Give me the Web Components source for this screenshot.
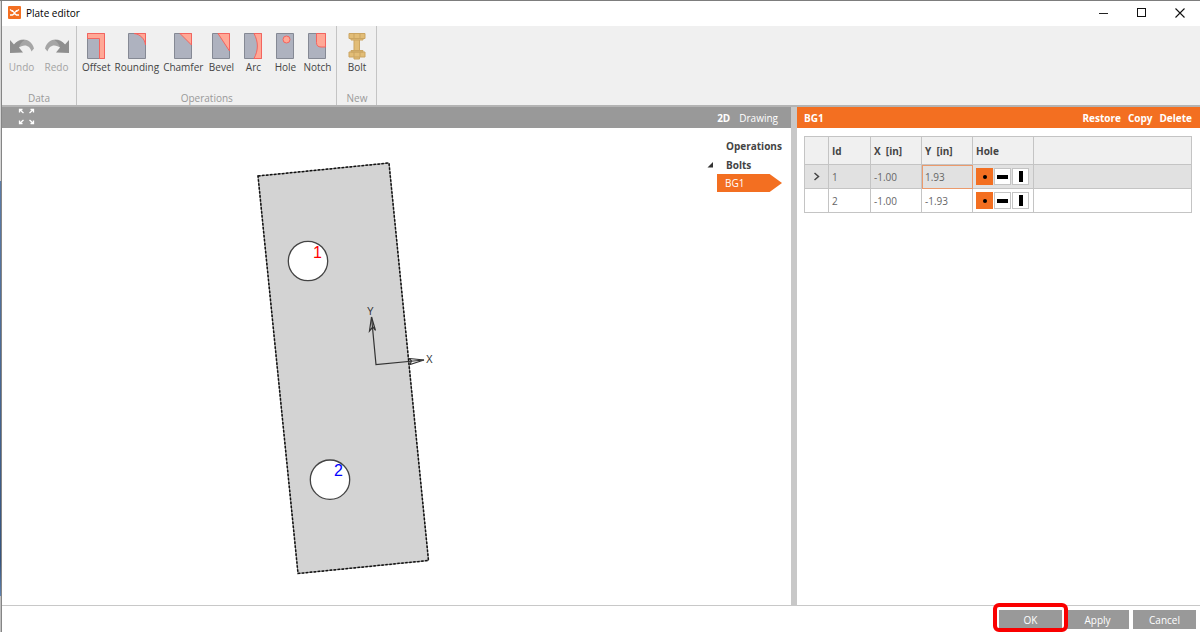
<!DOCTYPE html>
<html lang="en">
<head>
<meta charset="utf-8">
<title>Plate editor</title>
<style>
  html, body { margin: 0; height: 100%; }
  body { font: 10px/14px "Open Sans", "Noto Sans", sans-serif; color: #444; background: #fff; }
</style>
</head>
<body>
<plate-editor></plate-editor>

<template id="plate-editor">
  <style>
    :host { display: flex; flex-direction: column; height: 100vh; box-sizing: border-box;
      border-top: 1px solid #7d7d7d; position: relative; padding-left: 2px; --accent: #f36f21; --bar: #999; }
    .edge { position: absolute; left: 0; top: 0; bottom: 0; width: 2px;
      background: linear-gradient(90deg, transparent 50%, #858585 50%), linear-gradient(#d5d5d5 180px, #5c7ca8 180px, #35547f 560px, #6083b0 595px, #c0c0c0 595px); }
    main { flex: 1; min-height: 0; display: grid; grid-template-columns: minmax(0, 789fr) 6px minmax(0, 403fr); }
    .split { background: #c8c8c8; }
    section { display: flex; flex-direction: column; min-width: 0; min-height: 0; }
    .work { flex: 1; min-height: 0; display: flex; }
    plate-canvas { flex: 1; min-width: 0; }
    .table { padding: 8px 8px 0 7px; }
    button { font: inherit; color: inherit; background: none; border: 0; padding: 0; }
    .quiet { font-weight: 400; }
    svg { display: block; }
  </style>
  <div class="edge"></div>
  <title-bar>Plate editor</title-bar>
  <plate-ribbon></plate-ribbon>
  <main>
    <section>
      <panel-bar>
        <button slot="lead" aria-label="Zoom to fit"><svg width="18" height="18" viewBox="0 0 18 18" fill="none" stroke="#fff" stroke-width="1.3"><path d="M1.500 5.500V2.500H4.500M1.500 2.500L5.500 6M12.500 2.500H15.500V5.500M15.500 2.500L11.500 6M1.500 13.500V16.500H4.500M1.500 16.500L5.500 13M12.500 16.500H15.500V13.500M15.500 16.500L11.500 13"/></svg></button>
        <button>2D</button><button class="quiet">Drawing</button>
      </panel-bar>
      <div class="work"><plate-canvas></plate-canvas><operation-tree></operation-tree></div>
    </section>
    <div class="split"></div>
    <section>
      <panel-bar accent><span slot="lead">BG1</span><button>Restore</button><button>Copy</button><button>Delete</button></panel-bar>
      <div class="table"><bolt-table></bolt-table></div>
    </section>
  </main>
  <dialog-actions></dialog-actions>
</template>

<template id="title-bar">
  <style>
    :host { display: flex; align-items: center; height: 23px; flex: none; color: #000; padding: 0 11px 2px 6px; gap: 5px; }
    .name { flex: 1; }
    .controls { display: flex; gap: 20px; }
    button { border: 0; background: none; padding: 0; width: 18px; height: 18px; }
    svg { display: block; }
  </style>
  <svg width="13" height="13" viewBox="0 0 13 13"><rect width="13" height="13" rx="1" fill="#f36f21"/><path d="M2 3.500L4.500 5.500M11 3.500L8.500 5.500M4.300 4.500L6.500 6.800L8.700 4.500" fill="none" stroke="#fff" stroke-width="1.200"/><path d="M2 9H4.500L6.500 7.500L8.500 9H11" fill="none" stroke="#fff" stroke-width="1.500"/></svg>
  <span class="name"><slot></slot></span>
  <div class="controls">
    <button aria-label="Minimize"><svg width="18" height="18"><path d="M4 9.500H13" stroke="#222"/></svg></button>
    <button aria-label="Maximize"><svg width="18" height="18"><rect x="4.500" y="4.500" width="8" height="8" fill="none" stroke="#111"/></svg></button>
    <button aria-label="Close"><svg width="18" height="18"><path d="M4.500 4.500L13.500 13.500M13.500 4.500L4.500 13.500" stroke="#111" stroke-width="1.100"/></svg></button>
  </div>
</template>

<template id="plate-ribbon">
  <style>
    :host { display: flex; flex: none; height: 79px; background: #f0f0f0; border-bottom: 2px solid #b4b4b4; }
    svg { display: block; overflow: visible; }
    .g { fill: #aeb2bf; stroke: #858994; }
    .r { fill: #ffa896; stroke: #f4645f; }
    .b { fill: #e2bd77; stroke: #cba562; }
  </style>
  <ribbon-group label="Data" style="--item: 35px; --pad: 2px">
    <ribbon-button label="Undo" disabled><svg width="24" height="26" viewBox="0 0 24 26"><path d="M4 11.500C9 4.500 21 4 24 15.500L21.500 18.500C20 12 14 10.500 8 15Z" fill="#a5a5a5"/><path d="M0 7L4 11.500C7 8 11 6.500 14.500 7C11.500 9 10 11 9 14.500L13 19.500L0 20Z" fill="#8f8f8f"/></svg></ribbon-button>
    <ribbon-button label="Redo" disabled><svg width="24" height="26" viewBox="0 0 24 26"><g transform="matrix(-1 0 0 1 24 0)"><path d="M4 11.500C9 4.500 21 4 24 15.500L21.500 18.500C20 12 14 10.500 8 15Z" fill="#a5a5a5"/><path d="M0 7L4 11.500C7 8 11 6.500 14.500 7C11.500 9 10 11 9 14.500L13 19.500L0 20Z" fill="#8f8f8f"/></g></svg></ribbon-button>
  </ribbon-group>
  <ribbon-group label="Operations">
    <ribbon-button label="Offset"><svg width="18" height="26"><path class="g" d="M.5 .5H17.500V25.500H.5Z"/><path class="r" d="M.5 .5H17.500V25.500H12.500V5.500H.5Z"/></svg></ribbon-button>
    <ribbon-button label="Rounding"><svg width="18" height="26"><path class="g" d="M.5 .5H17.500V25.500H.5Z"/><path class="r" d="M6 .5H17.500V12C17 6 12 1 6 .5Z"/></svg></ribbon-button>
    <ribbon-button label="Chamfer"><svg width="18" height="26"><path class="g" d="M.5 .5H17.500V25.500H.5Z"/><path class="r" d="M6 .5H17.500V12Z"/></svg></ribbon-button>
    <ribbon-button label="Bevel"><svg width="18" height="26"><path class="g" d="M.5 .5H17.500V25.500H.5Z"/><path class="r" d="M6 .5H17.500V18Z"/></svg></ribbon-button>
    <ribbon-button label="Arc"><svg width="18" height="26"><path class="g" d="M.5 .5H17.500V25.500H.5Z"/><path class="r" d="M10 .5H17.500V25.500H10C14.500 17 14.500 9 10 .5Z"/></svg></ribbon-button>
    <ribbon-button label="Hole"><svg width="18" height="26"><path class="g" d="M.5 .5H17.500V25.500H.5Z"/><circle class="r" cx="10.500" cy="6.500" r="3.500"/></svg></ribbon-button>
    <ribbon-button label="Notch"><svg width="18" height="26"><path class="g" d="M.5 .5H17.500V25.500H.5Z"/><path class="r" d="M8.500 .5H17.500V14H13Q8.500 14 8.500 9.500Z"/></svg></ribbon-button>
  </ribbon-group>
  <ribbon-group label="New" style="--item: 31px; --pad: 4px">
    <ribbon-button label="Bolt"><svg width="18" height="26"><path class="b" d="M6 .5V26H11.500V.5Z"/><path class="b" d="M1 .5H17V5.500H1ZM1 19H17V24H1ZM6 .5V5.500M12 .5V5.500M6 19V24M12 19V24M3 5.500H15V7H3ZM3 17.500H15V19H3Z"/></svg></ribbon-button>
  </ribbon-group>
</template>

<template id="ribbon-group">
  <style>
    :host { display: flex; flex-direction: column; justify-content: space-between; border-right: 1px solid #c4c4c4; padding: 7px var(--pad, 3px) 0; }
    .items { display: flex; }
    .label { text-align: center; color: #999; }
  </style>
  <div class="items"><slot></slot></div>
  <div class="label"></div>
</template>

<template id="ribbon-button">
  <style>
    :host { display: block; }
    button { font: inherit; color: #444; border: 0; background: none; padding: 0 2px; min-width: var(--item, 32px); display: flex; flex-direction: column; align-items: center; gap: 1px; }
    button:disabled { color: #a3a3a3; }
  </style>
  <button><slot></slot><span></span></button>
</template>

<template id="panel-bar">
  <style>
    :host { display: flex; align-items: center; flex: none; height: 21px; background: var(--bar); color: #fff; font-weight: 700; padding: 0 13px 0 16px; gap: 9px; }
    :host([accent]) { background: var(--accent); padding: 0 8px 0 7px; gap: 7px; }
    .lead { flex: 1; }
  </style>
  <div class="lead"><slot name="lead"></slot></div><slot></slot>
</template>

<template id="plate-canvas">
  <style>
    :host { display: block; }
    svg { display: block; width: 100%; height: 100%; font-family: "Liberation Sans", Arial, sans-serif; }
  </style>
  <svg viewBox="2 128 704 477" preserveAspectRatio="xMidYMid meet" role="img" aria-label="Plate with two bolt holes">
    <path d="M258 176L389 163L428.500 560.500L298 573.500Z" fill="#d3d3d3" stroke="#777" stroke-width="1"/>
    <path d="M258 176L389 163L428.500 560.500L298 573.500Z" fill="none" stroke="#111" stroke-width="1.500" stroke-dasharray="2.500 1.500"/>
    <g fill="#fff" stroke="#444" stroke-width="1.300"><circle cx="308" cy="261" r="19.700"/><circle cx="330" cy="479.700" r="19.700"/></g>
    <text x="313" y="258" font-size="16" fill="#f00">1</text>
    <text x="334" y="476" font-size="16" fill="#00f">2</text>
    <g fill="none" stroke="#333" stroke-width="1.200">
      <path d="M371.500 317L376 364.500L424 360"/>
      <path d="M371.500 317L369.500 331L372.800 327L375.500 330.500ZM424 360L409 358.500L411.500 361L410 364.500Z"/>
    </g>
    <text x="367" y="315" font-size="10" fill="#333">Y</text>
    <text x="426" y="363" font-size="10" fill="#333">X</text>
  </svg>
</template>

<template id="operation-tree">
  <style>
    :host { display: block; flex: none; width: 85px; box-sizing: border-box; padding: 9px 9px 0 0; font-weight: 700; }
    ul { list-style: none; margin: 0; padding: 0; }
    li > div { display: flex; align-items: center; height: 18px; padding-left: 20px; position: relative; }
    svg { position: absolute; left: 1px; top: 6px; }
    a { display: block; height: 18px; line-height: 18px; margin-left: 11px; padding-left: 8px; color: #fff; background: var(--accent); text-decoration: none; font-weight: 400; clip-path: polygon(0 0, 81% 0, 100% 50%, 81% 100%, 0 100%); }
    .bolts { margin-top: 1px; }
  </style>
  <ul>
    <li><div>Operations</div></li>
    <li class="bolts"><div><svg width="6" height="6"><path d="M6 0V5.500H.5Z" fill="#333"/></svg>Bolts</div>
      <ul><li><a href="#bg1">BG1</a></li></ul></li>
  </ul>
</template>

<template id="bolt-table">
  <style>
    :host { display: block; }
    table { width: 100%; border-collapse: collapse; table-layout: fixed; }
    th, td { border: 1px solid #c4c4c4; padding: 0 0 0 3px; text-align: left; height: 24px; box-sizing: border-box; white-space: pre; color: #666; }
    th { height: 28px; background: #f0f0f0; color: #444; font-weight: 700; }
    tr.on td { background: #e1e1e1; }
    tr.on td.cur { outline: 1px solid #eb9a6c; outline-offset: -1px; }
    td.mark { padding: 0; }
    svg { display: block; margin: auto; }
  </style>
  <table>
    <colgroup><col style="width:24px"><col style="width:42px"><col style="width:51px"><col style="width:51px"><col style="width:61px"><col></colgroup>
    <thead><tr><th></th><th>Id</th><th>X  [in]</th><th>Y  [in]</th><th>Hole</th><th></th></tr></thead>
    <tbody>
      <tr class="on"><td class="mark"><svg width="7" height="9"><path d="M1.500 1L5.500 4.500L1.500 8" fill="none" stroke="#444" stroke-width="1.500"/></svg></td><td>1</td><td>-1.00</td><td class="cur">1.93</td><td><hole-shape></hole-shape></td><td></td></tr>
      <tr><td></td><td>2</td><td>-1.00</td><td>-1.93</td><td><hole-shape></hole-shape></td><td></td></tr>
    </tbody>
  </table>
</template>

<template id="hole-shape">
  <style>
    :host { display: flex; gap: 1px; }
    label { display: grid; place-items: center; width: 17px; height: 17px; }
    input, i { grid-area: 1 / 1; }
    input { appearance: none; margin: 0; width: 17px; height: 17px; border: 1px solid #c4c4c4; background: #fff; }
    input:checked { background: var(--accent); border-color: var(--accent); }
    i { background: #000; pointer-events: none; z-index: 1; }
    .round { width: 4px; height: 4px; border-radius: 2px; }
    .wide { width: 11px; height: 4px; }
    .tall { width: 4px; height: 11px; }
  </style>
  <label><input type="radio" name="shape" aria-label="Round" checked><i class="round"></i></label>
  <label><input type="radio" name="shape" aria-label="Horizontal slot"><i class="wide"></i></label>
  <label><input type="radio" name="shape" aria-label="Vertical slot"><i class="tall"></i></label>
</template>

<template id="dialog-actions">
  <style>
    :host { display: flex; flex: none; justify-content: flex-end; gap: 4px; padding: 4px 4px 3px; border-top: 1px solid #c8c8c8; }
    button { font: inherit; width: 63px; height: 19px; padding: 0; border: 0; color: #fff; background: var(--bar); }
    .ok { position: relative; }
    .ok::after { content: ""; position: absolute; inset: -7px -6px -3px -6px; border: 4px solid #fa0000; border-radius: 6px; }
  </style>
  <button class="ok">OK</button><button>Apply</button><button>Cancel</button>
</template>

<script>
  class TemplateElement extends HTMLElement {
    constructor() {
      super();
      const source = document.getElementById(this.localName);
      this.attachShadow({ mode: "open" }).append(document.importNode(source.content, true));
    }
  }
  class RibbonGroup extends TemplateElement {
    connectedCallback() {
      this.shadowRoot.querySelector(".label").textContent = this.getAttribute("label");
    }
  }
  class RibbonButton extends TemplateElement {
    connectedCallback() {
      this.shadowRoot.querySelector("span").textContent = this.getAttribute("label");
      this.shadowRoot.querySelector("button").disabled = this.hasAttribute("disabled");
    }
  }
  customElements.define("ribbon-group", RibbonGroup);
  customElements.define("ribbon-button", RibbonButton);
  for (const name of ["hole-shape", "bolt-table", "title-bar", "plate-ribbon", "panel-bar", "plate-canvas", "operation-tree", "dialog-actions", "plate-editor"]) {
    customElements.define(name, class extends TemplateElement {});
  }
</script>
</body>
</html>
